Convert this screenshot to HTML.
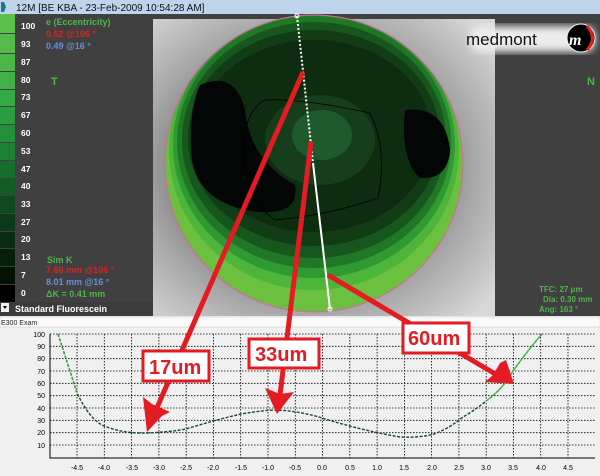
<!DOCTYPE html>
<html><head><meta charset="utf-8"><style>
body{margin:0;width:600px;height:476px;overflow:hidden;background:#f0f0f0;font-family:"Liberation Sans",sans-serif}
svg{display:block}
</style></head><body>
<svg width="600" height="476" viewBox="0 0 600 476" xmlns="http://www.w3.org/2000/svg" font-family="Liberation Sans, sans-serif">
<defs>
<radialGradient id="gray" cx="0.45" cy="0.5" r="0.7">
<stop offset="0.4" stop-color="#6a6a6a"/>
<stop offset="0.7" stop-color="#a8a8a8"/>
<stop offset="1" stop-color="#d8d8d8"/>
</radialGradient>
<filter id="bl"><feGaussianBlur stdDeviation="4"/></filter>
<clipPath id="cc"><ellipse cx="314" cy="163.5" rx="149" ry="148.5"/></clipPath>
</defs>
<rect x="0" y="0" width="600" height="14" fill="#bdd4ec"/>
<path d="M1 2 L4 2 L6 7 L4 12 L1 12Z" fill="#1a7a8a"/>
<text x="16" y="11" font-size="10" fill="#111">12M [BE KBA - 23-Feb-2009 10:54:28 AM]</text>
<rect x="0" y="14" width="600" height="302" fill="#404040"/>
<g>
<rect x="0" y="14" width="15" height="19" fill="#5cc04c"/>
<rect x="0" y="34" width="15" height="19" fill="#52bb4a"/>
<rect x="0" y="54" width="15" height="17" fill="#4ab848"/>
<rect x="0" y="72" width="15" height="17" fill="#3fb246"/>
<rect x="0" y="90" width="15" height="16" fill="#35aa44"/>
<rect x="0" y="107" width="15" height="17" fill="#2a9e3e"/>
<rect x="0" y="125" width="15" height="17" fill="#22903a"/>
<rect x="0" y="143" width="15" height="17" fill="#1c8034"/>
<rect x="0" y="161" width="15" height="17" fill="#166e2c"/>
<rect x="0" y="179" width="15" height="16" fill="#125c25"/>
<rect x="0" y="196" width="15" height="17" fill="#0f4a1e"/>
<rect x="0" y="214" width="15" height="17" fill="#0c3a17"/>
<rect x="0" y="232" width="15" height="16" fill="#0a2d12"/>
<rect x="0" y="249" width="15" height="17" fill="#07200c"/>
<rect x="0" y="267" width="15" height="17" fill="#041206"/>
<rect x="0" y="285" width="15" height="18" fill="#000"/>
</g>
<g font-size="8.5" fill="#fff" font-weight="bold">
<text x="21" y="29">100</text><text x="21" y="47">93</text><text x="21" y="65">87</text><text x="21" y="83">80</text>
<text x="21" y="100">73</text><text x="21" y="118">67</text><text x="21" y="136">60</text><text x="21" y="154">53</text>
<text x="21" y="172">47</text><text x="21" y="189">40</text><text x="21" y="207">33</text><text x="21" y="225">27</text>
<text x="21" y="242">20</text><text x="21" y="260">13</text><text x="21" y="278">7</text><text x="21" y="296">0</text>
</g>
<g font-size="9" font-weight="bold">
<text x="46" y="25" fill="#4eb548">e (Eccentricity)</text>
<text x="46" y="37" fill="#e02020">0.52 @106 °</text>
<text x="46" y="49" fill="#6a8ed8">0.49 @16 °</text>
<text x="51" y="85" font-size="11" fill="#4eb548">T</text>
<text x="47" y="263" fill="#4eb548">Sim K</text>
<text x="46" y="273" fill="#e02020">7.60 mm @106 °</text>
<text x="46" y="285" fill="#6a8ed8">8.01 mm @16 °</text>
<text x="46" y="297" fill="#4eb548">ΔK = 0.41 mm</text>
<text x="587" y="85" font-size="11" fill="#4eb548">N</text>
<text x="539" y="292" font-size="8" fill="#4eb548">TFC: 27 μm</text>
<text x="543" y="302" font-size="8" fill="#4eb548">Dia: 0.30 mm</text>
<text x="539" y="312" font-size="8" fill="#4eb548">Ang: 163 °</text>
</g>
<rect x="0" y="302" width="152" height="14" fill="#3c3c3c"/>
<rect x="1" y="303" width="8" height="9" fill="#f0f0f0"/>
<path d="M3 306 L7 306 L5 309Z" fill="#000"/>
<text x="15" y="312" font-size="9" fill="#fff" font-weight="bold">Standard Fluorescein</text>
<!-- eye image -->
<rect x="153" y="19" width="342" height="297" fill="url(#gray)"/>
<g clip-path="url(#cc)">
<ellipse cx="314" cy="163.5" rx="149" ry="148.5" fill="#6cc040"/>
<ellipse cx="314" cy="150" rx="145" ry="140" fill="#4db53a"/>
<ellipse cx="314" cy="145" rx="141" ry="133" fill="#2f9a32"/>
<ellipse cx="314" cy="142" rx="137" ry="126" fill="#207826"/>
<ellipse cx="314" cy="140" rx="132" ry="118" fill="#17561c"/>
<ellipse cx="314" cy="138" rx="126" ry="108" fill="#113c15"/>
<ellipse cx="314" cy="136" rx="118" ry="96" fill="#0d2c10"/>
<path d="M200 85 Q235 70 245 110 Q250 160 295 185 Q300 215 258 212 Q200 205 192 160 Q188 110 200 85Z" fill="#030604"/>
<path d="M405 110 Q445 105 450 150 Q448 180 420 178 Q400 160 405 110Z" fill="#030604"/>
<ellipse cx="320" cy="140" rx="55" ry="45" fill="#163e1c"/>
<ellipse cx="322" cy="135" rx="30" ry="25" fill="#1e5a2c"/>
<path d="M265 100 Q300 98 370 113 Q388 150 378 198 Q330 215 275 220 Q245 200 243 150 Q245 110 265 100Z" fill="none" stroke="#000" stroke-width="0.8"/>
</g>
<ellipse cx="314" cy="163.5" rx="149" ry="148.5" fill="none" stroke="#e060a0" stroke-width="1"/>
<!-- logo -->
<rect x="470" y="26" width="125" height="26" rx="10" fill="#ececec" filter="url(#bl)"/>
<text x="466" y="45" font-size="17" fill="#111">medmont</text>
<circle cx="581" cy="38" r="14" fill="#000" stroke="#eee" stroke-width="1"/>
<path d="M587 26 Q598 38 587 50" stroke="#e02020" stroke-width="3" fill="none"/>
<text x="569" y="45" font-size="16" font-style="italic" font-weight="bold" fill="#fff" font-family="Liberation Serif, serif">m</text>
<!-- white line -->
<line x1="297" y1="16" x2="313" y2="163" stroke="#fff" stroke-width="2" stroke-dasharray="2,2"/>
<line x1="313" y1="163" x2="330" y2="309" stroke="#fff" stroke-width="2"/>
<circle cx="297" cy="16" r="2" fill="none" stroke="#fff"/>
<circle cx="330" cy="309" r="2" fill="none" stroke="#fff"/>
<!-- bottom panel -->
<rect x="0" y="316" width="600" height="160" fill="#f0f0f0"/>
<rect x="0" y="317" width="600" height="10" fill="#fafafa" stroke="#c8c8c8" stroke-width="0.5"/>
<text x="1" y="325" font-size="7" fill="#222">E300 Exam</text>
<g stroke="#000" stroke-width="0.8" stroke-dasharray="1.5,1.5">
<line x1="50" y1="334" x2="595" y2="334"/>
<line x1="50" y1="346.3" x2="595" y2="346.3"/>
<line x1="50" y1="358.7" x2="595" y2="358.7"/>
<line x1="50" y1="371" x2="595" y2="371"/>
<line x1="50" y1="383.3" x2="595" y2="383.3"/>
<line x1="50" y1="395.7" x2="595" y2="395.7"/>
<line x1="50" y1="408" x2="595" y2="408"/>
<line x1="50" y1="420.3" x2="595" y2="420.3"/>
<line x1="50" y1="432.7" x2="595" y2="432.7"/>
<line x1="50" y1="445" x2="595" y2="445"/>
<line x1="77" y1="334" x2="77" y2="458"/><line x1="104.3" y1="334" x2="104.3" y2="458"/>
<line x1="131.6" y1="334" x2="131.6" y2="458"/><line x1="158.9" y1="334" x2="158.9" y2="458"/>
<line x1="186.2" y1="334" x2="186.2" y2="458"/><line x1="213.4" y1="334" x2="213.4" y2="458"/>
<line x1="240.7" y1="334" x2="240.7" y2="458"/><line x1="268" y1="334" x2="268" y2="458"/>
<line x1="295.3" y1="334" x2="295.3" y2="458"/><line x1="322.5" y1="334" x2="322.5" y2="458"/>
<line x1="349.8" y1="334" x2="349.8" y2="458"/><line x1="377.1" y1="334" x2="377.1" y2="458"/>
<line x1="404.4" y1="334" x2="404.4" y2="458"/><line x1="431.6" y1="334" x2="431.6" y2="458"/>
<line x1="458.9" y1="334" x2="458.9" y2="458"/><line x1="486.2" y1="334" x2="486.2" y2="458"/>
<line x1="513.5" y1="334" x2="513.5" y2="458"/><line x1="540.7" y1="334" x2="540.7" y2="458"/>
<line x1="568" y1="334" x2="568" y2="458"/>
</g>
<path d="M50 334 V458 H595" fill="none" stroke="#000" stroke-width="1"/>
<g font-size="7" fill="#000" text-anchor="end">
<text x="45" y="337">100</text><text x="45" y="349">90</text><text x="45" y="361">80</text><text x="45" y="374">70</text>
<text x="45" y="386">60</text><text x="45" y="398">50</text><text x="45" y="411">40</text><text x="45" y="423">30</text>
<text x="45" y="435">20</text><text x="45" y="448">10</text>
</g>
<g font-size="7" fill="#000" text-anchor="middle">
<text x="77" y="470">-4.5</text><text x="104" y="470">-4.0</text><text x="132" y="470">-3.5</text><text x="159" y="470">-3.0</text>
<text x="186" y="470">-2.5</text><text x="213" y="470">-2.0</text><text x="241" y="470">-1.5</text><text x="268" y="470">-1.0</text>
<text x="295" y="470">-0.5</text><text x="322" y="470">0.0</text><text x="350" y="470">0.5</text><text x="377" y="470">1.0</text>
<text x="404" y="470">1.5</text><text x="432" y="470">2.0</text><text x="459" y="470">2.5</text><text x="486" y="470">3.0</text>
<text x="513" y="470">3.5</text><text x="541" y="470">4.0</text><text x="568" y="470">4.5</text>
</g>
<path d="M58 334 Q68 365 77 393 Q90 420 104 426 Q125 434 147 433 Q170 432 186 429 Q215 420 241 414 Q265 410 276 410 Q300 411 322 418 Q360 430 400 437 Q420 438 434 434 Q450 428 460 419 Q478 408 486 401 Q502 390 513 371 Q528 350 542 334" fill="none" stroke="#1a4a22" stroke-width="1.4" stroke-dasharray="3,1.5"/>
<path d="M58 334 Q68 365 77 393" fill="none" stroke="#2ea83a" stroke-width="1.2" stroke-dasharray="3,1.5"/>
<path d="M486 401 Q502 390 513 371 Q528 350 542 334" fill="none" stroke="#3cbf3c" stroke-width="1.2"/>
<g stroke="#e31b23" stroke-width="5" fill="none">
<line x1="303" y1="72" x2="156" y2="410"/>
<line x1="311" y1="142" x2="280" y2="395"/>
<line x1="328" y1="275" x2="497" y2="375"/>
</g>
<g fill="#e31b23">
<path d="M147 432 L143 397 L152 404 L170 412 L162 416Z"/>
<path d="M277 414 L265 388 L280 394 L294 392Z"/>
<path d="M514 384 L485 382 L493 375 L500 363 L506 360Z"/>
</g>
<g font-weight="bold" font-size="20" fill="#e31b23">
<rect x="143" y="351" width="66" height="30" fill="#fff" stroke="#e31b23" stroke-width="3"/>
<text x="149" y="374">17um</text>
<rect x="249" y="339" width="70" height="29" fill="#fff" stroke="#e31b23" stroke-width="3"/>
<text x="255" y="361">33um</text>
<rect x="403" y="323" width="66" height="30" fill="#fff" stroke="#e31b23" stroke-width="3"/>
<text x="408" y="345">60um</text>
</g>
</svg>
</body></html>
